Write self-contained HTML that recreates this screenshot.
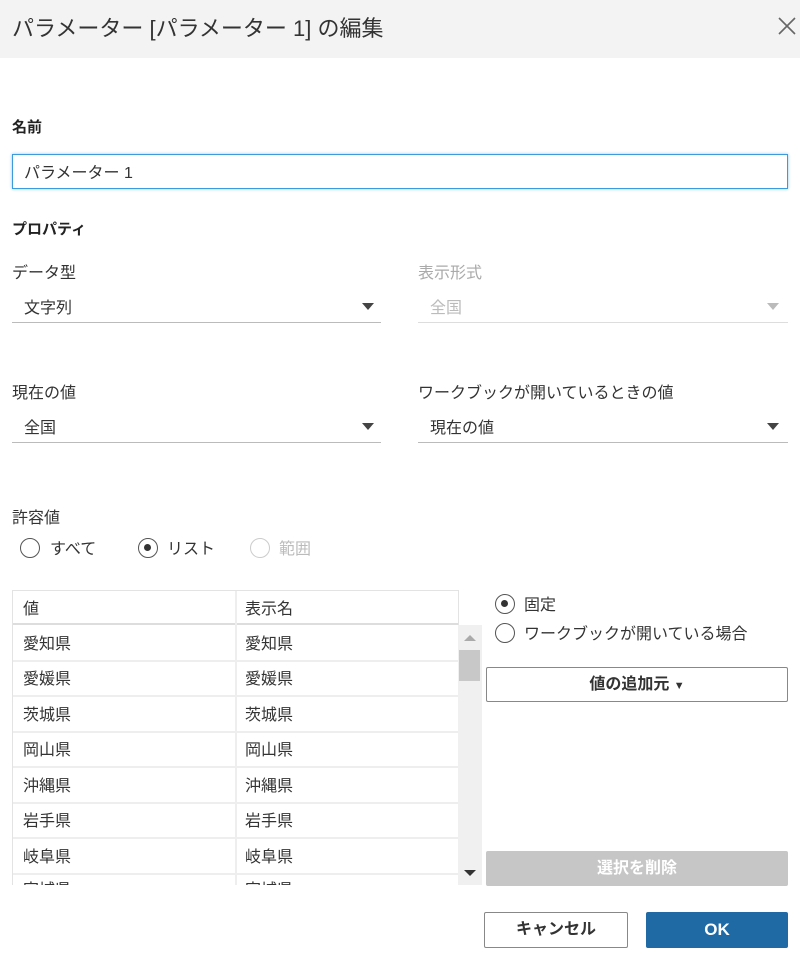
<!DOCTYPE html>
<html><head><meta charset="utf-8"><style>
*{box-sizing:border-box;margin:0;padding:0}
body{width:800px;height:955px;background:#fff;position:relative;overflow:hidden;font-family:"Liberation Sans","Noto Sans CJK JP",sans-serif;color:#333;font-size:16px;line-height:1.1}
.a{position:absolute;white-space:nowrap}
.hdr{left:0;top:0;width:800px;height:58px;background:#f3f3f3}
.lbl{font-size:16px;color:#333}
.b{font-weight:bold;font-size:15px;color:#222}
.sel{height:1px;background:#bbb}
.tri{width:0;height:0;border-left:6px solid transparent;border-right:6px solid transparent;border-top:7px solid #444}
.rad{width:20px;height:20px;border:1.5px solid #555;border-radius:50%;background:#fff}
.rad.on::after{content:"";position:absolute;left:5px;top:5px;width:7px;height:7px;border-radius:50%;background:#333}
.row{position:absolute;left:13px;width:445px;height:35.5px;border-bottom:2px solid #eee;font-size:16px;color:#333}
.row span{position:absolute;top:10px}
</style></head><body>
<div class="a hdr"></div>
<div class="a" style="left:12px;top:17px;font-size:22px;color:#333">パラメーター [パラメーター 1] の編集</div>
<svg class="a" style="left:778px;top:17px" width="18" height="18"><path d="M1 1L17 17M17 1L1 17" stroke="#666" stroke-width="1.6"/></svg>

<div class="a b" style="left:12px;top:120px">名前</div>
<div class="a" style="left:12px;top:154px;width:776px;height:35px;border:1px solid #3c9bdc;box-shadow:0 0 3px #8cc7f0"></div>
<div class="a" style="left:24px;top:165px;font-size:16px">パラメーター 1</div>

<div class="a b" style="left:12px;top:222px">プロパティ</div>

<div class="a lbl" style="left:12px;top:265px">データ型</div>
<div class="a" style="left:24px;top:300px">文字列</div>
<div class="a tri" style="left:362px;top:303px"></div>
<div class="a sel" style="left:12px;top:322px;width:369px"></div>

<div class="a lbl" style="left:418px;top:265px;color:#aaa">表示形式</div>
<div class="a" style="left:430px;top:300px;color:#bbb">全国</div>
<div class="a tri" style="left:767px;top:303px;border-top-color:#bbb"></div>
<div class="a sel" style="left:418px;top:322px;width:370px;background:#ddd"></div>

<div class="a lbl" style="left:12px;top:385px">現在の値</div>
<div class="a" style="left:24px;top:420px">全国</div>
<div class="a tri" style="left:362px;top:423px"></div>
<div class="a sel" style="left:12px;top:442px;width:369px"></div>

<div class="a lbl" style="left:418px;top:385px">ワークブックが開いているときの値</div>
<div class="a" style="left:430px;top:420px">現在の値</div>
<div class="a tri" style="left:767px;top:423px"></div>
<div class="a sel" style="left:418px;top:442px;width:370px"></div>

<div class="a lbl" style="left:12px;top:510px">許容値</div>
<div class="a rad" style="left:20px;top:538px"></div><div class="a" style="left:50px;top:541px">すべて</div>
<div class="a rad on" style="left:138px;top:538px"></div><div class="a" style="left:167px;top:541px">リスト</div>
<div class="a rad" style="left:250px;top:538px;border-color:#ccc"></div><div class="a" style="left:279px;top:541px;color:#bbb">範囲</div>

<div class="a" style="left:12px;top:590px;width:447px;height:295px;border-left:1px solid #e3e3e3;border-top:1px solid #e3e3e3;border-right:1px solid #e3e3e3;overflow:hidden">
 <div style="position:absolute;left:0;top:0;width:446px;height:34px;border-bottom:2px solid #ddd"></div>
 <div style="position:absolute;left:222px;top:0;width:2px;height:300px;background:#eee"></div>
 <div style="position:absolute;left:10px;top:10px">値</div>
 <div style="position:absolute;left:232px;top:10px">表示名</div>
</div>
<div class="row" style="top:626px"><span style="left:10px">愛知県</span><span style="left:232px">愛知県</span></div>
<div class="row" style="top:661px"><span style="left:10px">愛媛県</span><span style="left:232px">愛媛県</span></div>
<div class="row" style="top:697px"><span style="left:10px">茨城県</span><span style="left:232px">茨城県</span></div>
<div class="row" style="top:732px"><span style="left:10px">岡山県</span><span style="left:232px">岡山県</span></div>
<div class="row" style="top:768px"><span style="left:10px">沖縄県</span><span style="left:232px">沖縄県</span></div>
<div class="row" style="top:803px"><span style="left:10px">岩手県</span><span style="left:232px">岩手県</span></div>
<div class="row" style="top:839px"><span style="left:10px">岐阜県</span><span style="left:232px">岐阜県</span></div>
<div class="a" style="left:13px;top:874px;width:445px;height:11px;overflow:hidden"><span style="position:absolute;left:10px;top:8px">宮城県</span><span style="position:absolute;left:232px;top:8px">宮城県</span></div>
<div class="a" style="left:0;top:885px;width:800px;height:70px;background:#fff"></div>

<div class="a" style="left:458px;top:625px;width:24px;height:260px;background:#f0f0f0"></div>
<div class="a" style="left:459px;top:650px;width:21px;height:31px;background:#c8c8c8"></div>
<div class="a" style="left:464px;top:635px;width:0;height:0;border-left:6px solid transparent;border-right:6px solid transparent;border-bottom:6px solid #aaa"></div>
<div class="a" style="left:464px;top:870px;width:0;height:0;border-left:6px solid transparent;border-right:6px solid transparent;border-top:6px solid #333"></div>

<div class="a rad on" style="left:495px;top:594px"></div><div class="a" style="left:524px;top:597px">固定</div>
<div class="a rad" style="left:495px;top:623px"></div><div class="a" style="left:524px;top:626px">ワークブックが開いている場合</div>

<div class="a" style="left:486px;top:667px;width:302px;height:35px;border:1px solid #888;border-radius:2px;text-align:center;line-height:33px;font-weight:bold;color:#333">値の追加元 <span style="font-size:11px">▼</span></div>
<div class="a" style="left:486px;top:851px;width:302px;height:35px;background:#c6c6c6;border-radius:2px;text-align:center;line-height:35px;font-weight:bold;color:#fff">選択を削除</div>

<div class="a" style="left:484px;top:912px;width:144px;height:36px;border:1px solid #888;border-radius:2px;text-align:center;line-height:34px;font-weight:bold;color:#333">キャンセル</div>
<div class="a" style="left:646px;top:912px;width:142px;height:36px;background:#1f6aa5;border-radius:2px;text-align:center;line-height:36px;font-weight:bold;color:#fff;font-size:17px">OK</div>
</body></html>
